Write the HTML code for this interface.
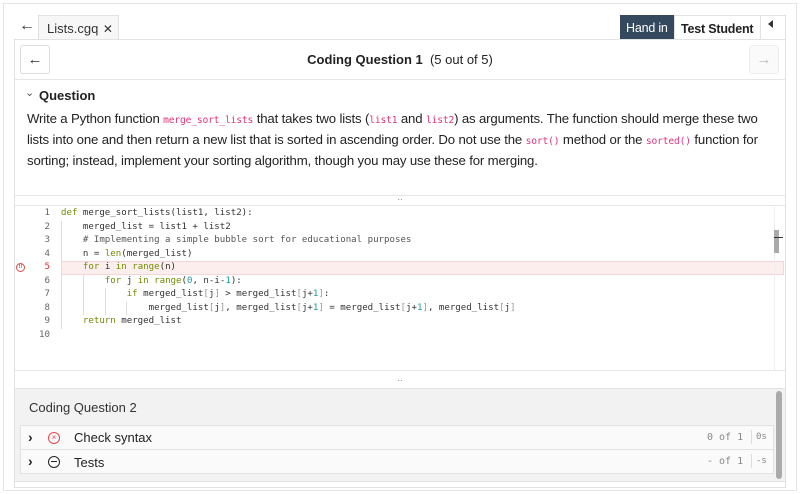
<!DOCTYPE html>
<html><head><style>
*{box-sizing:border-box;margin:0;padding:0}
body{width:800px;height:494px;background:#fff;font-family:"Liberation Sans",sans-serif;color:#222;position:relative;overflow:hidden}
.outer{position:absolute;left:3px;top:3px;width:794px;height:488px;border:1px solid #e4e4e4}
.abs{position:absolute}
.mono{font-family:"DejaVu Sans Mono","Liberation Mono",monospace}
.pink{color:#e0357b;font-family:"DejaVu Sans Mono",monospace;font-size:9.6px}
.code div{height:13.55px;line-height:13.55px;white-space:pre}
.kw{color:#708c00}.num{color:#1a9e9e}.cm{color:#555}.br{color:#999}
</style></head><body>
<div class="outer"></div>
<!-- tab row -->
<div class="abs" style="left:19px;top:17px;font-size:16px;color:#333">&#8592;</div>
<div class="abs" style="left:38px;top:15px;width:81px;height:25px;border:1px solid #e2e2e2;border-bottom:none;background:#f7f7f7;font-size:13px;padding:5px 0 0 8px;color:#333;white-space:nowrap">Lists.cgq <span style="font-size:12px;margin-left:1px">✕</span></div>
<div class="abs" style="left:620px;top:15px;width:54px;height:25px;background:#34495e;color:#fff;font-size:12.5px;padding:6px 0 0 6px;white-space:nowrap;letter-spacing:-0.2px">Hand in</div>
<div class="abs" style="left:674px;top:15px;width:112px;height:25px;border:1px solid #e2e2e2;border-bottom:none;font-size:12.5px;font-weight:bold;padding:6px 0 0 6px;white-space:nowrap;letter-spacing:-0.2px">Test Student</div>
<div class="abs" style="left:760px;top:15px;width:1px;height:25px;background:#e2e2e2"></div>
<div class="abs" style="left:768px;top:20px;width:0;height:0;border-top:4px solid transparent;border-bottom:4px solid transparent;border-right:5px solid #333"></div>
<!-- main panel -->
<div class="abs" style="left:14px;top:39px;width:772px;height:449px;border:1px solid #e2e2e2"></div>
<div class="abs" style="left:20px;top:45px;width:30px;height:29px;border:1px solid #ddd;border-radius:3px;text-align:center;font-size:15px;line-height:27px;color:#333">&#8592;</div>
<div class="abs" style="left:749px;top:45px;width:30px;height:29px;border:1px solid #eee;border-radius:3px;background:#fafafa;text-align:center;font-size:15px;line-height:27px;color:#bbb">&#8594;</div>
<div class="abs" style="left:0;top:52px;width:800px;text-align:center;font-size:13px"><b>Coding Question 1</b>&nbsp; (5 out of 5)</div>
<div class="abs" style="left:15px;top:79px;width:770px;height:1px;background:#e6e6e6"></div>
<div class="abs" style="left:25px;top:86px;font-size:11px;color:#555">&#8964;</div>
<div class="abs" style="left:39px;top:88px;font-size:13px;font-weight:bold">Question</div>
<div class="abs" style="left:27px;top:109px;width:752px;font-size:13.2px;line-height:19px;color:#222;letter-spacing:-0.15px">Write a Python function <span class="pink">merge_sort_lists</span> that takes two lists (<span class="pink">list1</span> and <span class="pink">list2</span>) as arguments. The function should merge these two lists into one and then return a new list that is sorted in ascending order. Do not use the <span class="pink">sort()</span> method or the <span class="pink">sorted()</span> function for sorting; instead, implement your sorting algorithm, though you may use these for merging.</div>
<!-- divider 1 -->
<div class="abs" style="left:15px;top:195px;width:770px;height:11px;border-top:1px solid #e6e6e6;border-bottom:1px solid #e6e6e6;text-align:center;font-size:8px;line-height:8px;color:#666">··</div>
<!-- editor -->
<div class="abs" style="left:61px;top:261px;width:723px;height:14px;background:#fdeeee;border:1px solid #f4d6d6"></div>
<div class="abs" style="left:16px;top:263px;width:9px;height:9px;border:1px solid #e04a4a;border-radius:50%;color:#e04a4a;font-size:6px;line-height:7px;text-align:center;font-weight:bold">!!</div>
<div class="abs mono code" style="left:28px;top:207px;width:22px;text-align:right;font-size:9.1px;color:#666">
<div>1</div><div>2</div><div>3</div><div>4</div><div style="color:#d33">5</div><div>6</div><div>7</div><div>8</div><div>9</div><div>10</div></div>
<div class="abs" style="left:61px;top:221px;width:1px;height:108px;background:#ddd"></div>
<div class="abs" style="left:83px;top:275px;width:1px;height:40px;background:#ddd"></div>
<div class="abs" style="left:105px;top:288px;width:1px;height:27px;background:#ddd"></div>
<div class="abs" style="left:126px;top:302px;width:1px;height:13px;background:#ddd"></div>
<div class="abs mono code" style="left:61px;top:207px;font-size:9.1px;color:#333">
<div><span class="kw">def</span> merge_sort_lists(list1, list2):</div>
<div>    merged_list = list1 + list2</div>
<div class="cm">    # Implementing a simple bubble sort for educational purposes</div>
<div>    n = <span class="kw">len</span>(merged_list)</div>
<div>    <span class="kw">for</span> i <span class="kw">in</span> <span class="kw">range</span>(n)</div>
<div>        <span class="kw">for</span> j <span class="kw">in</span> <span class="kw">range</span>(<span class="num">0</span>, n-i-<span class="num">1</span>):</div>
<div>            <span class="kw">if</span> merged_list<span class="br">[</span>j<span class="br">]</span> &gt; merged_list<span class="br">[</span>j+<span class="num">1</span><span class="br">]</span>:</div>
<div>                merged_list<span class="br">[</span>j<span class="br">]</span>, merged_list<span class="br">[</span>j+<span class="num">1</span><span class="br">]</span> = merged_list<span class="br">[</span>j+<span class="num">1</span><span class="br">]</span>, merged_list<span class="br">[</span>j<span class="br">]</span></div>
<div>    <span class="kw">return</span> merged_list</div>
<div></div></div>
<div class="abs" style="left:774px;top:207px;width:1px;height:163px;background:#eee"></div>
<div class="abs" style="left:774px;top:230px;width:5px;height:23px;background:#aaa"></div>
<div class="abs" style="left:774px;top:237px;width:9px;height:1px;background:#333"></div>
<!-- divider 2 -->
<div class="abs" style="left:15px;top:370px;width:770px;height:18px;border-top:1px solid #e6e6e6;text-align:center;font-size:8px;line-height:20px;color:#666">··</div>
<!-- bottom panel -->
<div class="abs" style="left:14px;top:388px;width:772px;height:94px;background:#f2f2f2;border:1px solid #e2e2e2"></div>
<div class="abs" style="left:776px;top:391px;width:6px;height:88px;background:#aaa;border-radius:3px"></div>
<div class="abs" style="left:29px;top:400px;font-size:13px;color:#333">Coding Question 2</div>
<div class="abs" style="left:20px;top:425px;width:754px;height:25px;background:#fafafa;border:1px solid #e2e2e2"></div>
<div class="abs" style="left:20px;top:450px;width:754px;height:24px;background:#fafafa;border:1px solid #e2e2e2;border-top:none"></div>
<div class="abs" style="left:28px;top:429px;font-size:14px;font-weight:bold">&#8250;</div>
<div class="abs" style="left:28px;top:453px;font-size:14px;font-weight:bold">&#8250;</div>
<div class="abs" style="left:48px;top:432px;width:12px;height:12px;border:1.3px solid #e04a4a;border-radius:50%;color:#e04a4a;font-size:8px;line-height:9px;text-align:center">×</div>
<div class="abs" style="left:48px;top:456px;width:12px;height:12px;border:1.3px solid #222;border-radius:50%"></div>
<div class="abs" style="left:51px;top:461px;width:6px;height:1.3px;background:#222"></div>
<div class="abs" style="left:74px;top:430px;font-size:13px">Check syntax</div>
<div class="abs" style="left:74px;top:455px;font-size:13px">Tests</div>
<div class="abs mono" style="left:707px;top:432px;font-size:10px;color:#888">0 of 1</div>
<div class="abs mono" style="left:707px;top:456px;font-size:10px;color:#888">- of 1</div>
<div class="abs" style="left:751px;top:430px;width:1px;height:14px;background:#ddd"></div>
<div class="abs" style="left:751px;top:454px;width:1px;height:14px;background:#ddd"></div>
<div class="abs mono" style="left:756px;top:432px;font-size:9px;color:#888">0s</div>
<div class="abs mono" style="left:756px;top:456px;font-size:9px;color:#888">-s</div>
</body></html>
